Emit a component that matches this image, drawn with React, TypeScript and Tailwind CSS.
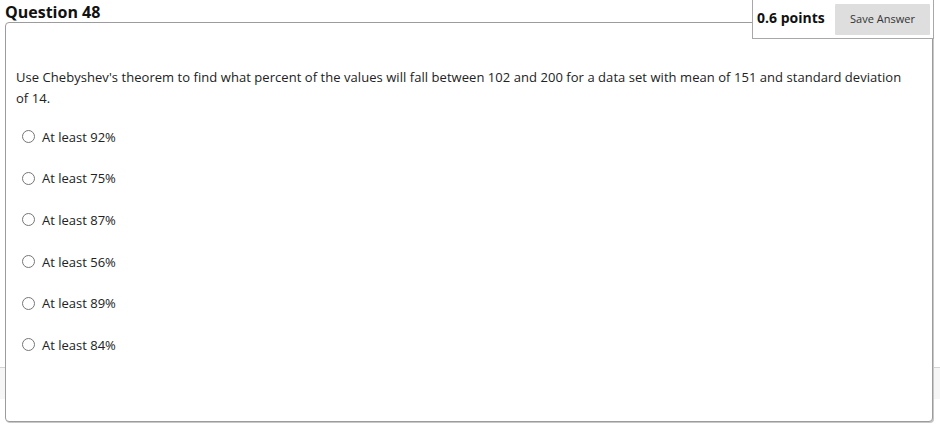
import React from 'react';

const options = ['At least 92%', 'At least 75%', 'At least 87%', 'At least 56%', 'At least 89%', 'At least 84%'];

export default function App() {
  return (
    <div className="relative w-[940px] h-[424px] bg-white overflow-hidden text-[#222]" style={{ fontFamily: '"Open Sans", "Noto Sans", sans-serif' }}>
      {/* page band behind the question card */}
      <div className="absolute left-0 right-0 top-[367px] h-[32px] bg-[#f6f6f6] border-t border-[#d4d4d4]" />

      <h2 className="relative px-[5px] pt-[2px] h-[22px] text-[16px] leading-[20px] font-bold text-[#111]">Question 48</h2>

      <div className="relative ml-[5px] w-[928px] h-[400px] bg-white border border-[#9c9c9c] rounded-[4px] shadow-[1px_1px_0_#c8c8c8] px-[10px] pt-[44px]">
        <p className="max-w-[892px] text-[13px] leading-[21px] tracking-[0.05px]">
          Use Chebyshev's theorem to find what percent of the values will fall between 102 and 200 for a data set with mean of 151 and standard deviation of 14.
        </p>
        <ul className="mt-[7px] flex flex-col">
          {options.map((o) => (
            <li key={o} className="h-[41.6px] flex items-center">
              <label className="flex items-center gap-[7px] pl-[6px] text-[13px] leading-[18px]">
                <span className="w-[13px] h-[13px] rounded-full border border-[#767676] bg-white" />
                {o}
              </label>
            </li>
          ))}
        </ul>
      </div>

      <div className="absolute top-[-1px] right-[6px] w-[182px] h-[40px] bg-white border border-[#a8a8a8] flex items-center justify-between pl-[4px] pr-[3px]">
        <span className="text-[14px] font-bold text-[#111] leading-[20px] -mt-[2px]">0.6 points</span>
        <button className="w-[95px] h-[31px] bg-[#dedede] text-[11px] text-[#333] rounded-[1px]">Save Answer</button>
      </div>
    </div>
  );
}
